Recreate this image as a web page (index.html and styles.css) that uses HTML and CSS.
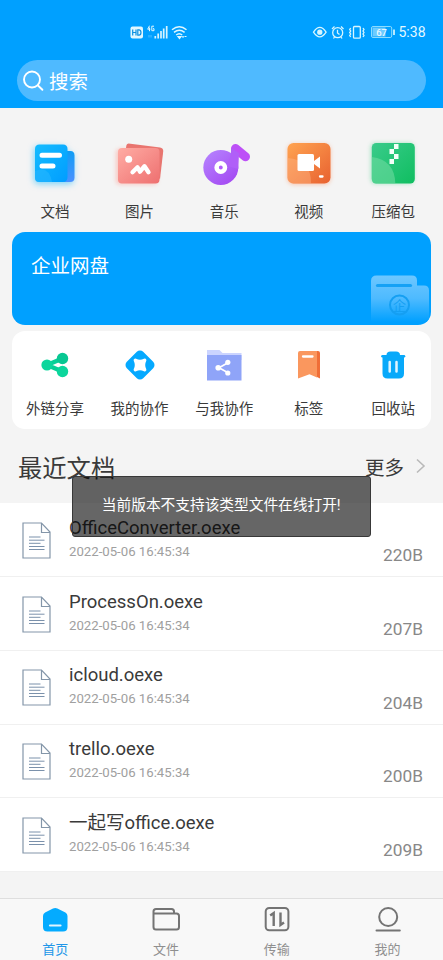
FILE: index.html
```html
<!DOCTYPE html>
<html lang="zh-CN">
<head>
<meta charset="utf-8">
<title>首页</title>
<link rel="stylesheet" href="styles.css">
</head>
<body>
<header class="header">
  <div class="status">
    <svg class="status-left" width="60" height="18" viewBox="130 23 60 18">
      <rect x="130.500" y="26.500" width="12.500" height="12" rx="2" fill="#e0f7ff"/>
      <path d="M132.700 29.500v6M136 29.500v6M132.700 32.500h3.300M137.800 29.800v5.400h1.200c2.600 0 2.600-5.400 0-5.400z" stroke="#0b8fe0" stroke-width="1.200" fill="none"/>
      <path d="M149.500 25.700l-1.800 3.500h2.700M149.500 27.500v3.700M154 26.200h-2.200v4.500h2.200v-2h-1" stroke="#e0f7ff" stroke-width="1" fill="none"/>
      <path d="M149 35v2.500M151 35v2.500" stroke="#65c6ff" stroke-width=".8"/>
      <path d="M155.300 36v2.500M158.200 33.500v5M161 31v7.500M163.700 28.500v10M166.700 26v12.500" stroke="#d7f4ff" stroke-width="1.700"/>
      <path d="M172 29.800q7.300-6.300 14.500 0M174 32.400q5.300-4.500 10.600 0M176.200 35q3-2.600 6 0" stroke="#e0f7ff" stroke-width="1.400" fill="none"/>
      <path d="M178 36.500h3l-1.500 2zM182 36.800h2M184.500 36.500h2" stroke="#e0f7ff" stroke-width="1.200" fill="#e0f7ff"/>
    </svg>
    <svg class="status-right" width="84" height="18" viewBox="312 23 84 18">
      <g fill="none" stroke="#d9f6ff" stroke-width="1.300">
        <path d="M313.500 32.200q6.300-9.500 12.600 0q-6.300 9.500-12.600 0z"/>
        <circle cx="319.800" cy="32.200" r="2" fill="#d9f6ff"/>
        <circle cx="337.700" cy="32.700" r="5"/>
        <path d="M337.500 29.700v3.200l2 1.500M332 29l2.500-2.500M341 26.500l2.500 2.500M334.500 37l-1 1.500M341 37l1 1.500"/>
        <rect x="353.500" y="26.500" width="6.800" height="11.700" rx="1"/>
        <path d="M350.700 28l-1 1.500 1 1.500-1 1.500 1 1.500-1 1.500 1 1.500M363 28l1 1.500-1 1.500 1 1.500-1 1.500 1 1.500-1 1.500"/>
        <rect x="371.500" y="26.500" width="20.200" height="11" rx="1.500" stroke="#8cdcff" stroke-width="1"/>
        <path d="M394 29.500v5.500" stroke-width="1.700"/>
      </g>
      <rect x="372.500" y="27.500" width="13" height="9" fill="#6ccbff"/>
      <text class="battery" x="381.500" y="35.900" text-anchor="middle">67</text>
    </svg>
    <span class="clock">5:38</span>
  </div>
  <div class="search">
    <svg width="22" height="22" viewBox="22 70 22 22"><g fill="none" stroke="#fff" stroke-width="1.900" stroke-linecap="round"><circle cx="32" cy="79.500" r="8"/><path d="M38 85.500l4.400 4.300"/></g></svg>
    <span>搜索</span>
  </div>
</header>

<main>
  <nav class="grid categories">
    <a class="tile">
      <svg width="60" height="62" viewBox="25 135 60 62">
        <defs>
          <linearGradient id="doc" x2="1" y2="1"><stop stop-color="#14bcff"/><stop offset="1" stop-color="#009dff"/></linearGradient>
          <linearGradient id="docBack" x2="0" y2="1"><stop stop-color="#0e9df5"/><stop offset="1" stop-color="#4b91ff"/></linearGradient>
        </defs>
        <g class="glow-blue"><path d="M64 151h6.500q4 0 4 4.500v22q0 4.500-4.500 4.500H55z" fill="url(#docBack)"/>
        <path d="M39.500 144.500H63q4.500 0 4.500 4.500V177q0 5-4.500 5H39.500q-4.500 0-4.500-4.500V149q0-4.500 4.500-4.500z" fill="url(#doc)"/></g>
        <path d="M35 171q14-6 17 11H39q-4 0-4-4z" fill="#27b5ff" opacity=".6"/>
        <path d="M42 155.200h17.500M42 166h11" stroke="#fff" stroke-width="5" stroke-linecap="round"/>
      </svg><span>文档</span>
    </a>
    <a class="tile">
      <svg width="60" height="62" viewBox="109.500 135 60 62">
        <defs><linearGradient id="photo" x2="1" y2="1"><stop stop-color="#ffaca4"/><stop offset="1" stop-color="#ee7070"/></linearGradient></defs>
        <path d="M128 143.500l31.500 4q3.500.5 3.200 4L159.500 179l-35-26 1.500-8q.5-1.500 2-1.500z" fill="#e87570"/>
        <rect class="glow-red" x="117.500" y="148" width="41.500" height="35.500" rx="4" fill="url(#photo)"/>
        <circle cx="128.200" cy="159.300" r="3.500" fill="#fff"/>
        <path d="M132 172.200l5-5 2.500 4.500 4.500-5.500 4 6" fill="none" stroke="#fff" stroke-width="4.300" stroke-linecap="round" stroke-linejoin="round"/>
      </svg><span>图片</span>
    </a>
    <a class="tile">
      <svg width="60" height="62" viewBox="194 135 60 62">
        <defs><linearGradient id="music" x1="0" y1="0" x2=".8" y2="1"><stop stop-color="#b686ff"/><stop offset="1" stop-color="#a449f2"/></linearGradient></defs>
        <path d="M235.500 148.500l10 8.200" stroke="#bd50f7" stroke-width="9" stroke-linecap="round"/>
        <circle cx="220.800" cy="167.500" r="17.500" fill="url(#music)"/>
        <path d="M231 148v6l-4 12 11.300 3L239 153z" fill="#b05ff8"/>
        <circle cx="220.800" cy="167.500" r="4.200" fill="none" stroke="#fff" stroke-width="4.500"/>
        <circle cx="220.800" cy="167.500" r="1.300" fill="#b65aff"/>
      </svg><span>音乐</span>
    </a>
    <a class="tile">
      <svg width="60" height="62" viewBox="279 135 60 62">
        <defs><linearGradient id="video" x2="1" y2="1"><stop stop-color="#ffa451"/><stop offset="1" stop-color="#e86130"/></linearGradient></defs>
        <rect class="glow-orange" x="287.500" y="143" width="43" height="40.500" rx="6" fill="url(#video)"/>
        <path d="M287.500 158q24 2 23.500 25.500h-17q-6.500 0-6.500-6z" fill="#ffb78a" opacity=".42"/>
        <rect x="297.500" y="154" width="16.500" height="17" rx="1.500" fill="#fff"/>
        <path d="M314 161l6-4.500v12l-6-4.500z" fill="#fff"/><path d="M320 176.500h2.500" stroke="#fff" stroke-width="2.300" stroke-linecap="round"/>
      </svg><span>视频</span>
    </a>
    <a class="tile">
      <svg width="60" height="62" viewBox="363.500 135 60 62">
        <defs><linearGradient id="zip" x2="1" y2="1"><stop stop-color="#39cb8b"/><stop offset="1" stop-color="#10be60"/></linearGradient></defs>
        <rect class="glow-green" x="372.300" y="143" width="43" height="40.500" rx="4.500" fill="url(#zip)"/>
        <path d="M372.300 157q23 3 23.500 26.500h-19q-4.500 0-4.500-4z" fill="#74dda4" opacity=".55"/>
        <path d="M394.500 144h4.500v5h-4.500zM390 149h4.500v5H390zM394.500 154h4.500v5h-4.500zM390 159h4.500v5H390z" fill="#f3fff8"/>
      </svg><span>压缩包</span>
    </a>
  </nav>

  <section class="drive">
    <h2>企业网盘</h2>
    <svg class="drive-icon" width="59" height="50" viewBox="370 275 59 50">
      <defs><linearGradient id="fade" x2="0" y2="1"><stop stop-color="#6ec7ff"/><stop offset=".5" stop-color="#4dbaff"/><stop offset="1" stop-color="#00a0ff"/></linearGradient></defs>
      <path d="M376.500 275.500H412q5 0 5 5v5h7q5 0 5 5V322h-58v-41q0-5.500 5.500-5.500z" fill="url(#fade)"/>
      <path d="M377.500 285.500h33" stroke="#16a1f5" stroke-width="3.200" stroke-linecap="round"/>
      <circle cx="399.500" cy="305" r="9.500" fill="none" stroke="#159ff2" stroke-width="2"/>
      <text class="drive-mark" x="399.500" y="309.500" text-anchor="middle">企</text>
    </svg>
  </section>

  <nav class="grid actions">
    <a class="tile">
      <svg width="40" height="40" viewBox="35 345 40 40">
        <path d="M47 365L62.500 358.500M47 365L62.500 371.500" stroke="#08cf97" stroke-width="4.500"/>
        <circle cx="47" cy="365" r="5.600" fill="#0cd69c"/><circle cx="62.500" cy="358.500" r="5.700" fill="#08c792"/><circle cx="62.500" cy="371.500" r="5.700" fill="#0cd69c"/>
      </svg><span>外链分享</span>
    </a>
    <a class="tile">
      <svg width="40" height="40" viewBox="119.500 345 40 40">
        <path d="M139.500 355L129.500 365l10 10L149.500 365z" fill="#05a9ff" stroke="#05a9ff" stroke-width="9" stroke-linejoin="round"/>
        <path d="M134.800 360.300q4.700 2.400 9.400 0q-2.400 4.700 0 9.400q-4.700-2.400-9.400 0q2.400-4.700 0-9.400z" fill="#fff" stroke="#fff" stroke-width="3.400" stroke-linejoin="round"/>
      </svg><span>我的协作</span>
    </a>
    <a class="tile">
      <svg width="40" height="40" viewBox="204.500 345 40 40">
        <path d="M207.500 350H220l3 3h19v7h-34.500z" fill="#cbd4ff"/><path d="M207.500 355H242v25.500h-34.500z" fill="#8fa4f8"/>
        <path d="M219.500 367.700l9-5M219.500 367.700l9 5" stroke="#fff" stroke-width="1.700"/><g fill="#fff"><circle cx="218.700" cy="367.700" r="2.800"/><circle cx="228.300" cy="362.300" r="2.600"/><circle cx="228.300" cy="373" r="2.600"/></g>
      </svg><span>与我协作</span>
    </a>
    <a class="tile">
      <svg width="40" height="40" viewBox="289 345 40 40">
        <path d="M300 351h18q2 0 2 2v25.500l-4-2V353z" fill="#f06e37"/><path d="M300 351h17v26.500l-7.500-3.300-11.500 4.300V353q0-2 2-2z" fill="#fa975e"/><path d="M303 356.500h9.500" stroke="#fff" stroke-width="2.300" stroke-linecap="round"/>
      </svg><span>标签</span>
    </a>
    <a class="tile">
      <svg width="40" height="40" viewBox="373.500 345 40 40">
        <path d="M383 356h21.500v17.500q0 5-5 5H388q-5 0-5-5zM387 355q0-3.500 4-3.500h5.500q4 0 4 3.500z" fill="#08a9fa"/>
        <path d="M383 356.300h21.500" stroke="#08a9fa" stroke-width="2.600" stroke-linecap="round"/><path d="M390.200 362v9.500M397 362v9.500" stroke="#e0f5ff" stroke-width="2.500" stroke-linecap="round"/>
      </svg><span>回收站</span>
    </a>
  </nav>

  <div class="recent-head">
    <h2>最近文档</h2>
    <a class="more">更多<svg width="10" height="16" viewBox="0 0 10 16"><path d="M1 1.500L8 8l-7 6.500" fill="none" stroke="#b9b9b9" stroke-width="1.600"/></svg></a>
  </div>

  <svg class="symbols" width="0" height="0"><symbol id="file" viewBox="0 0 29 37"><path d="M1 1h18.500l8.500 9v26H1zM19.500 1v9.500H28" fill="none" stroke="#8496a9" stroke-width="1.200"/><path d="M7 15h11.500M7 18.200h15.500M7 21.300h11.500M7 24.500h15.500M7 27.500h15.500" stroke="#7b91ab" stroke-width="1"/></symbol></svg>
  <ul class="files">
    <li><svg class="file-icon"><use href="#file"/></svg><div class="info"><b>OfficeConverter.oexe</b><time>2022-05-06 16:45:34</time></div><span class="size">220B</span></li>
    <li><svg class="file-icon"><use href="#file"/></svg><div class="info"><b>ProcessOn.oexe</b><time>2022-05-06 16:45:34</time></div><span class="size">207B</span></li>
    <li><svg class="file-icon"><use href="#file"/></svg><div class="info"><b>icloud.oexe</b><time>2022-05-06 16:45:34</time></div><span class="size">204B</span></li>
    <li><svg class="file-icon"><use href="#file"/></svg><div class="info"><b>trello.oexe</b><time>2022-05-06 16:45:34</time></div><span class="size">200B</span></li>
    <li><svg class="file-icon"><use href="#file"/></svg><div class="info"><b>一起写office.oexe</b><time>2022-05-06 16:45:34</time></div><span class="size">209B</span></li>
  </ul>
</main>

<nav class="tabbar">
  <a class="active"><svg width="30" height="28" viewBox="40.500 906 30 28"><path d="M53.500 908.600q2.200-1.300 4.400 0l8 4q2.100 1.200 2.100 3.500v11q0 4.500-4.500 4.500H48q-4.500 0-4.500-4.500v-11q0-2.300 2.100-3.500z" fill="#04abff"/><path d="M50.500 925.500H61" stroke="#dff4ff" stroke-width="2.200" stroke-linecap="round"/></svg><span>首页</span></a>
  <a><svg width="30" height="28" viewBox="151.500 906 30 28"><path d="M174.500 913.500v-2q0-2.500-2.500-2.500h-15.500q-2.500 0-2.500 2.500V927q0 2.500 2.500 2.500h20.500q2.500 0 2.500-2.500v-11q0-2.500-2.500-2.500H154" fill="none" stroke="#747474" stroke-width="2"/></svg><span>文件</span></a>
  <a><svg width="30" height="28" viewBox="262.300 906 30 28"><g fill="none" stroke="#747474" stroke-width="2"><rect x="266" y="908" width="22.700" height="22.300" rx="3.500"/><path d="M270.500 915.500l3.500-2.500v13M280.800 912.500V925l3.500-2.500" stroke-width="2.400"/></g></svg><span>传输</span></a>
  <a><svg width="30" height="28" viewBox="373 906 30 28"><circle cx="388.200" cy="917" r="9" fill="none" stroke="#747474" stroke-width="2"/><path d="M376.500 930.500h23.300" stroke="#747474" stroke-width="2" stroke-linecap="round"/></svg><span>我的</span></a>
</nav>
<div class="toast">当前版本不支持该类型文件在线打开!</div>
</body>
</html>
```
FILE: styles.css
```css
* { box-sizing: border-box; margin: 0; padding: 0; }
body {
  width: 443px;
  height: 960px;
  overflow: hidden;
  display: flex;
  flex-direction: column;
  position: relative;
  background: #f4f4f4;
  color: #3a3a3a;
  font-family: Roboto, "Noto Sans CJK SC", sans-serif;
}
svg { display: block; flex: none; }

.header { height: 108px; background: #00a0ff; padding: 23px 17px 0; }
.status { display: flex; height: 18px; }
.status-left { margin-left: 113px; }
.status-right { margin-left: 122px; }
.clock { margin-left: 2.500px; color: #e5f8ff; font-size: 14px; line-height: 19px; }
.battery { fill: #fff; font-size: 9.5px; }
.search {
  display: flex;
  align-items: center;
  gap: 5px;
  width: 409px;
  height: 41px;
  margin-top: 19px;
  padding-left: 5px;
  border-radius: 21px;
  background: #4fbaff;
  color: #fff;
  font-size: 19.500px;
}

.grid { display: grid; grid-template-columns: repeat(5, 84.600px); }
.tile { display: flex; flex-direction: column; align-items: center; font-size: 14.500px; line-height: 20px; white-space: nowrap; }
.categories { height: 124px; padding: 27px 0 0 12.700px; }
.categories span { margin-top: 6px; }
.glow-blue { filter: drop-shadow(-1px 2px 3px #00b4ff80); }
.glow-red { filter: drop-shadow(-2px 1px 2px #ff807060); }
.glow-orange { filter: drop-shadow(0 1px 2px #ff703060); }
.glow-green { filter: drop-shadow(-1px 0 2px #20c97060); }

.drive {
  position: relative;
  width: 419px;
  height: 92.500px;
  margin-left: 12px;
  padding: 20px 19px;
  border-radius: 13px;
  overflow: hidden;
  background: #00a0ff;
  color: #fff;
}
.drive h2 { font-size: 19.500px; font-weight: 400; line-height: 29px; }
.drive-icon { position: absolute; right: 2px; bottom: 0; }
.drive-mark { font-size: 13px; fill: #159ff2; }

.actions { width: 419px; height: 98px; margin: 6.500px 0 0 12px; padding: 14px 0 0 .7px; border-radius: 13px; background: #fff; }
.actions span { margin-top: 15px; }

.recent-head { display: flex; justify-content: space-between; align-items: center; height: 74.300px; padding: 0 17px 0 18px; }
.recent-head h2 { font-size: 24.300px; font-weight: 400; }
.more { display: flex; align-items: center; gap: 12px; font-size: 19.500px; }

.symbols { position: absolute; }
.files { list-style: none; background: #fff; }
.files li { display: flex; height: 73.800px; padding: 0 20px 0 22px; border-bottom: 1px solid #f0f0f0; }
.file-icon { width: 29px; height: 37px; margin-top: 18.500px; }
.info { display: flex; flex-direction: column; flex: 1; margin-left: 18px; padding-top: 10.600px; white-space: nowrap; }
.info b { font-size: 18.500px; font-weight: 400; line-height: 28px; }
.info time { color: #a0a0a0; font-size: 13.200px; line-height: 20px; }
.size { align-self: flex-end; margin-bottom: 10px; color: #888; font-size: 17.300px; line-height: 21px; }

.tabbar { display: grid; grid-template-columns: repeat(4, 1fr); height: 62px; margin-top: auto; border-top: 1px solid #dedede; background: #f8f8f8; flex: none; }
.tabbar a { display: flex; flex-direction: column; align-items: center; padding-top: 7px; color: #8f8f8f; font-size: 13px; line-height: 18px; }
.tabbar span { margin-top: 7px; }
.tabbar .active { color: #2196e8; }

.toast {
  position: absolute;
  left: 71.500px;
  top: 475.500px;
  width: 299.500px;
  height: 61.500px;
  border: 1px solid #383838;
  border-radius: 3px;
  background: rgba(0, 0, 0, .6);
  color: #fff;
  font-size: 14.700px;
  line-height: 57px;
  text-align: center;
  white-space: nowrap;
}
```
